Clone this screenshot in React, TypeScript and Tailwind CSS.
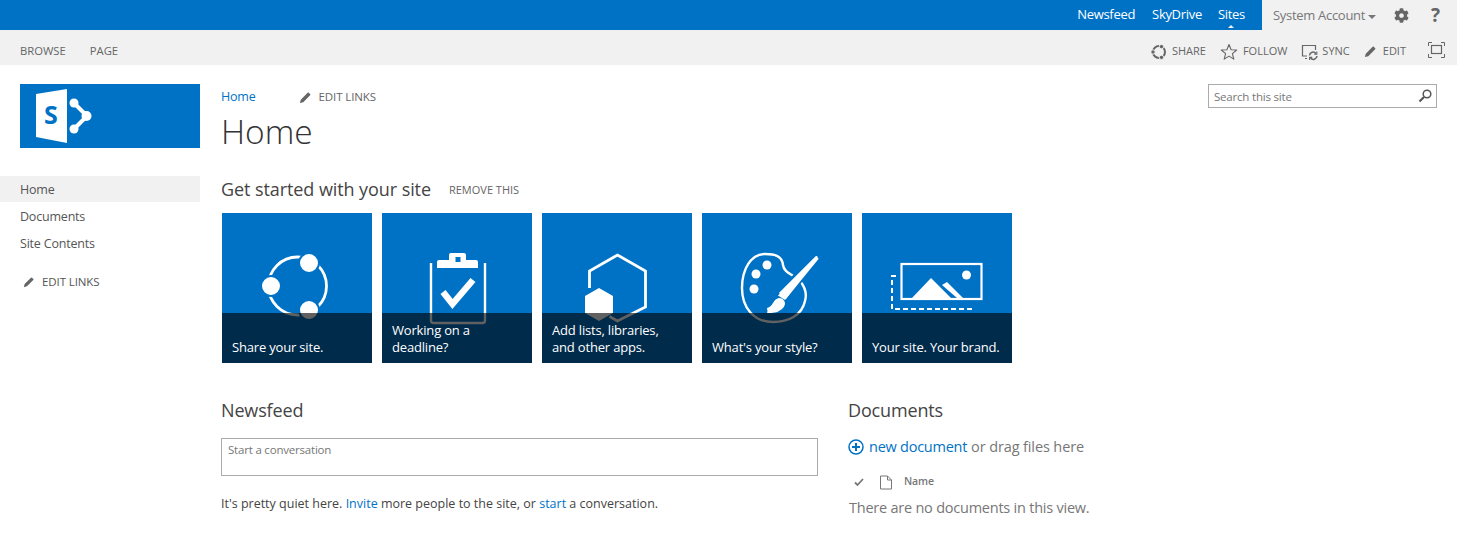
import React from "react";
import { FaCog } from "react-icons/fa";

const Pencil = ({ className = "" }: { className?: string }) => (
  <svg viewBox="0 0 14 14" className={className} fill="#666">
    <path d="M1 13l.9-3.600 7.400-7.400a.9.9 0 0 1 1.300 0l1.400 1.400a.9.9 0 0 1 0 1.300L4.600 12.100z" />
  </svg>
);

const ShareSmall = () => (
  <svg viewBox="0 0 16 16" className="h-4 w-4" fill="none">
    <circle cx="8" cy="8" r="6" stroke="#666" strokeWidth="2" />
    <circle cx="10.500" cy="2.600" r="2.200" fill="#666" stroke="#f1f1f1" />
    <circle cx="2" cy="8" r="2.200" fill="#666" stroke="#f1f1f1" />
    <circle cx="10.500" cy="13.400" r="2.200" fill="#666" stroke="#f1f1f1" />
  </svg>
);

const StarSmall = () => (
  <svg viewBox="0 0 18 18" className="h-[18px] w-[18px]" fill="none">
    <path d="M9 1.500l2.100 5.200 5.600.3-4.300 3.600 1.400 5.500L9 13.100l-4.800 3 1.400-5.500L1.300 7l5.600-.3z" stroke="#666" strokeWidth="1.100" strokeLinejoin="round" />
  </svg>
);

const SyncSmall = () => (
  <svg viewBox="0 0 18 18" className="h-[18px] w-[18px]" fill="none" stroke="#666">
    <path d="M6 13H1.500V2.500h13V7" strokeWidth="1.200" />
    <path d="M4 15.500h2" strokeWidth="1.200" />
    <path d="M8.500 12.500a3.600 3.600 0 0 1 6.400-2M16 13a3.600 3.600 0 0 1-6.400 2" strokeWidth="1.500" />
    <path d="M15.800 8.500v2.600h-2.600M8.600 17v-2.600h2.600" strokeWidth="1.100" />
  </svg>
);

const FocusSmall = () => (
  <svg viewBox="0 0 17 16" className="h-4 w-[17px]" fill="none" stroke="#666">
    <path d="M.5 4V.5H4M13 .5h3.500V4M.5 12v3.500H4M13 15.500h3.500V12" />
    <rect x="3.500" y="3.500" width="10" height="8" strokeWidth="1.200" />
  </svg>
);

const Ribbon = ({ icon, label, className = "" }: { icon: React.ReactNode; label: string; className?: string }) => (
  <div className={`flex items-center ${className}`}>
    {icon}
    <span className="text-[11px] text-[#666]">{label}</span>
  </div>
);

const B = "#0072c6";

const ShareIcon = () => (
  <svg viewBox="0 0 150 150" className="h-[150px] w-[150px]">
    <circle cx="75.500" cy="73" r="29" fill="none" stroke="#fff" strokeWidth="2.800" />
    {[[87, 50], [49, 73], [87, 97]].map(([x, y]) => (
      <circle key={x * y} cx={x} cy={y} r="10" fill="#fff" stroke={B} strokeWidth="2" />
    ))}
  </svg>
);

const ClipIcon = () => (
  <svg viewBox="0 0 150 150" className="h-[150px] w-[150px]">
    <path d="M49 50v57.500q0 2.500 2.500 2.500h49q2.500 0 2.500-2.500V50" fill="none" stroke="#fff" strokeWidth="2.400" />
    <path fillRule="evenodd" fill="#fff" d="M67 47v-5q0-2 2-2h13q2 0 2 2v5h10q2 0 2 2v6H55v-6q0-2 2-2zM73.500 44v5h5v-5z" />
    <path d="M61 79l9.500 12L91 67" fill="none" stroke="#fff" strokeWidth="6.500" />
  </svg>
);

const HexIcon = () => (
  <svg viewBox="0 0 150 150" className="h-[150px] w-[150px]">
    <path d="M47.500 75V58L75.500 42l28 16v36L75.500 108l-8-4.500" fill="none" stroke="#fff" strokeWidth="2.800" />
    <path d="M57 75l14 8v17l-14 8-14-8V83z" fill="#fff" />
  </svg>
);

const PaletteIcon = () => (
  <svg viewBox="0 0 150 150" className="h-[150px] w-[150px]">
    <path
      d="M63 41c10 0 17 2 18 11 1 8 10 9 17 16 5 6 7 13 5 20-3 14-16 21-32 21-19 0-31-14-31-34 0-19 9-34 23-34z"
      fill="none"
      stroke="#fff"
      strokeWidth="2.400"
    />
    <circle cx="65" cy="52" r="4.500" fill="#fff" />
    <circle cx="54" cy="61" r="4.500" fill="#fff" />
    <circle cx="52" cy="76" r="4.500" fill="#fff" />
    <path d="M75 80l38-38q3-1 4 2-1 2-33 44z" fill="#fff" stroke={B} strokeWidth="2.500" />
    <path d="M76 82.500l38-38q2.500-1 2.500 1.500L83 87z" fill="#fff" />
    <path d="M65 95c6-1 6-9 12-10 4 0 6 3 6 6-1 4-3 5-6 7-3 2-9 2-12 2 1-1 0-4 0-5z" fill="#fff" />
  </svg>
);

const BrandIcon = () => (
  <svg viewBox="0 0 150 150" className="h-[150px] w-[150px]">
    <rect x="39.500" y="51" width="80" height="35" fill="none" stroke="#fff" strokeWidth="2.200" />
    <circle cx="104.500" cy="62" r="4.500" fill="#fff" />
    <path d="M50 85l19-20 20 20zM80 72l5-3 16 16h-6z" fill="#fff" />
    <path d="M34 63h-4v33h79v-4" fill="none" stroke="#fff" strokeWidth="2" strokeDasharray="5 3" />
  </svg>
);

const Tile = ({ icon, text }: { icon: React.ReactNode; text: React.ReactNode }) => (
  <div className="relative h-[150px] w-[150px] bg-[#0072c6]">
    {icon}
    <div className="absolute inset-x-0 bottom-0 h-[50px] bg-[rgba(0,0,0,0.62)]" />
    <div className="absolute inset-x-0 bottom-0 flex h-[50px] flex-col justify-end px-[10px] pb-[7px] text-[13px] leading-[17px] tracking-[-0.18px] text-white">
      {text}
    </div>
  </div>
);

export default function App() {
  return (
    <div className="flex h-[537px] w-[1457px] flex-col overflow-hidden bg-white font-['Open_Sans',sans-serif] text-[#444]">
      <header className="flex h-[30px] items-stretch justify-end bg-[#0072c6]">
        <nav className="flex items-center pr-[17px] text-[13px] tracking-[-0.3px] text-white">
          <span className="mr-[17px]">Newsfeed</span>
          <span className="mr-4">SkyDrive</span>
          <span className="relative">
            Sites
            <span className="absolute left-1/2 top-[20px] -ml-[3px] h-0 w-0 border-x-[3px] border-b-[3px] border-x-transparent border-b-[#f1f1f1]" />
          </span>
        </nav>
        <div className="flex w-[195px] items-center bg-[#f1f1f1] pl-[11px]">
          <span className="mt-[2px] text-[13px] tracking-[-0.3px] text-[#777]">System Account</span>
          <span className="ml-[3px] mt-[3px] h-0 w-0 border-x-[4px] border-t-[4px] border-x-transparent border-t-[#777]" />
          <FaCog className="ml-[18px] h-[15px] w-[15px] text-[#666]" />
          <span className="ml-[22px] text-[19px] font-bold leading-none text-[#666]">?</span>
        </div>
      </header>

      <div className="flex h-[35px] items-center justify-between bg-[#f1f1f1] pl-5 pr-[12px] pt-[7px]">
        <div className="flex gap-6 text-[11.250px] text-[#666]">
          <span>BROWSE</span>
          <span>PAGE</span>
        </div>
        <div className="flex items-center pt-px">
          <Ribbon icon={<span className="mr-[5px]"><ShareSmall /></span>} label="SHARE" className="mr-[14px]" />
          <Ribbon icon={<span className="mr-[5px]"><StarSmall /></span>} label="FOLLOW" className="mr-[14px]" />
          <Ribbon icon={<span className="mr-[3px]"><SyncSmall /></span>} label="SYNC" className="mr-[14px]" />
          <Ribbon icon={<span className="mr-[6px]"><Pencil className="h-[13px] w-[13px]" /></span>} label="EDIT" className="mr-[22px]" />
          <span className="-mt-[3px]"><FocusSmall /></span>
        </div>
      </div>

      <div className="flex flex-1">
        <aside className="w-[200px] shrink-0 pt-[19px]">
          <div className="relative ml-5 h-16 w-[180px] bg-[#0072c6]">
            <svg viewBox="0 0 180 64" className="h-16 w-[180px]">
              <path d="M16 10L47 5v54l-31-6z" fill="#fff" />
              <path d="M54 19l13 13-13 13" fill="none" stroke="#fff" strokeWidth="4" />
              <circle cx="54" cy="19" r="4.500" fill="#fff" />
              <circle cx="66.500" cy="32" r="5" fill="#fff" />
              <circle cx="54" cy="45" r="4.500" fill="#fff" />
            </svg>
            <span className="absolute left-[24px] top-[13px] text-[25px] font-bold leading-[34px] text-[#0072c6]">S</span>
          </div>
          <nav className="mt-7 text-[12.500px] tracking-[-0.2px] text-[#555]">
            <div className="flex h-[26px] items-center bg-[#f1f1f1] px-5 pt-[2px]">Home</div>
            <div className="flex h-[28px] items-center px-5 pt-[2px]">Documents</div>
            <div className="flex h-[26px] items-center px-5 pt-[2px]">Site Contents</div>
            <div className="mt-[13px] flex h-[26px] items-center gap-[7px] pl-[23px] text-[11.500px] tracking-[-0.1px]">
              <Pencil className="h-3 w-3" />
              EDIT LINKS
            </div>
          </nav>
        </aside>

        <main className="flex-1 pl-[21px] pr-5">
          <div className="flex justify-between pt-[19px]">
            <div>
              <div className="flex h-[26px] items-center text-[12.500px] tracking-[-0.2px]">
                <span className="text-[#0072c6]">Home</span>
                <Pencil className="ml-[43px] mr-[7px] h-[13px] w-[13px]" />
                <span className="text-[11.500px] tracking-[-0.1px] text-[#666]">EDIT LINKS</span>
              </div>
              <h1 className="-mt-[2px] text-[33.500px] font-light leading-[46px] text-[#333]">Home</h1>
            </div>
            <div className="flex h-6 w-[229px] items-center justify-between border border-[#ababab] pl-[5px] pr-[3px]">
              <span className="pt-[2px] text-[11.500px] tracking-[-0.2px] text-[#777]">Search this site</span>
              <svg viewBox="0 0 16 16" className="h-4 w-4" fill="none" stroke="#555">
                <circle cx="10" cy="6" r="3.800" strokeWidth="1.500" />
                <path d="M7 9l-4.500 4.500" strokeWidth="2.200" />
              </svg>
            </div>
          </div>

          <div className="mt-[21px] flex h-7 items-center">
            <h2 className="text-[18px] tracking-[-0.08px] text-[#444]">Get started with your site</h2>
            <span className="ml-[18px] mt-[3px] text-[11px] text-[#666]">REMOVE THIS</span>
          </div>

          <div className="ml-px mt-[10px] flex gap-[10px]">
            <Tile icon={<ShareIcon />} text="Share your site." />
            <Tile icon={<ClipIcon />} text={<>Working on a<br />deadline?</>} />
            <Tile icon={<HexIcon />} text={<>Add lists, libraries,<br />and other apps.</>} />
            <Tile icon={<PaletteIcon />} text="What's your style?" />
            <Tile icon={<BrandIcon />} text="Your site. Your brand." />
          </div>

          <div className="mt-[33px] flex">
            <section className="w-[597px]">
              <h2 className="text-[18px] leading-7 tracking-[-0.15px] text-[#444]">Newsfeed</h2>
              <div className="mt-[14px] h-[38px] border border-[#ababab] px-[6px] text-[11.500px] leading-[21px] tracking-[-0.2px] text-[#777]">
                Start a conversation
              </div>
              <p className="mt-[18px] text-[12.500px] leading-[20px] text-[#444]">
                It's pretty quiet here. <span className="text-[#0072c6]">Invite</span> more people to the site, or{" "}
                <span className="text-[#0072c6]">start</span> a conversation.
              </p>
            </section>
            <section className="ml-[30px]">
              <h2 className="text-[18px] leading-7 tracking-[-0.15px] text-[#444]">Documents</h2>
              <div className="mt-[13px] flex h-5 items-center text-[14.500px] tracking-[-0.25px] text-[#777]">
                <svg viewBox="0 0 16 16" className="mr-[5px] h-4 w-4" fill="none" stroke="#0072c6">
                  <circle cx="8" cy="8" r="7" strokeWidth="1.500" />
                  <path d="M8 4v8M4 8h8" strokeWidth="2" />
                </svg>
                <span className="text-[#0072c6]">new document</span>
                <span className="ml-1 tracking-[-0.12px]">or drag files here</span>
              </div>
              <div className="mt-[15px] flex h-5 items-center pl-[6px] text-[#777]">
                <svg viewBox="0 0 10 10" className="h-[10px] w-[10px]" fill="none" stroke="#777" strokeWidth="1.800">
                  <path d="M1 5.500l2.500 2.500L9 2" />
                </svg>
                <svg viewBox="0 0 12 14" className="ml-[16px] h-[15px] w-[12px]" fill="none" stroke="#777">
                  <path d="M.5.500h7l4 4v9h-11zM7.500.500v4h4" />
                </svg>
                <span className="ml-[12px] text-[10.500px] font-semibold tracking-[-0.1px]">Name</span>
              </div>
              <p className="ml-px mt-[6px] text-[14.500px] leading-5 tracking-[-0.23px] text-[#777]">There are no documents in this view.</p>
            </section>
          </div>
        </main>
      </div>
    </div>
  );
}
